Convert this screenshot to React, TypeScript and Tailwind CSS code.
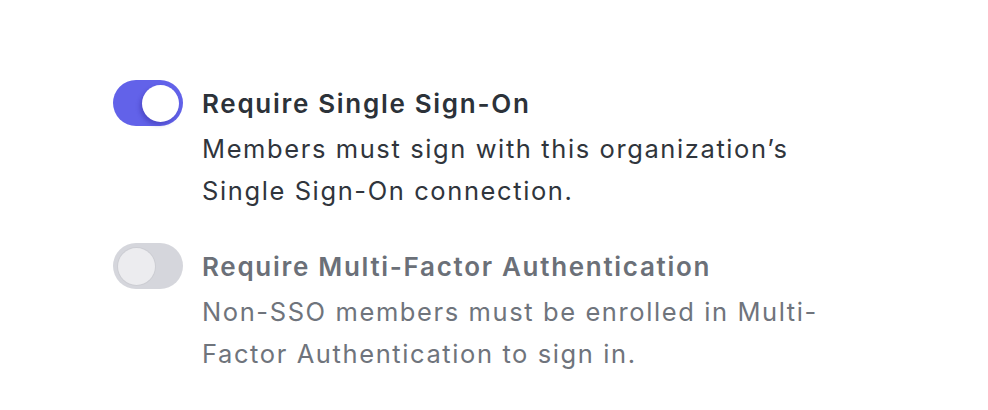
import React, { useState } from "react";

interface SettingProps {
  title: string;
  description: string;
  enabled: boolean;
  disabled?: boolean;
  onToggle: () => void;
}

function Setting({ title, description, enabled, disabled, onToggle }: SettingProps) {
  return (
    <div className="flex items-start gap-[19px]">
      {/* Switch */}
      <button
        type="button"
        role="switch"
        aria-checked={enabled}
        disabled={disabled}
        onClick={onToggle}
        className={`relative flex h-[46px] w-[70px] shrink-0 items-center rounded-full px-[4px] transition-colors ${
          enabled ? "bg-[#6262e9] justify-end" : "bg-[#d5d6dc] justify-start"
        }`}
      >
        <span
          className={`block h-[37px] w-[37px] rounded-full ${
            enabled
              ? "bg-white shadow-[-2px_3px_4px_rgba(40,30,140,0.35)]"
              : "bg-[#ececef] shadow-[0_0_0_1px_rgba(0,0,0,0.04)] ml-[1px]"
          }`}
        />
      </button>

      {/* Label */}
      <div className={`mt-[6px] w-[630px] ${disabled ? "text-[#6b7078]" : "text-[#2c3239]"}`}>
        <div className="text-[26px] font-semibold leading-[36px] tracking-[1.7px]">{title}</div>
        <p
          className={`mt-[6px] text-[25.5px] leading-[42px] tracking-[1.6px] ${
            disabled ? "text-[#6f747c]" : "text-[#30353c]"
          }`}
        >
          {description}
        </p>
      </div>
    </div>
  );
}

export default function App() {
  const [sso, setSso] = useState(true);
  const [mfa, setMfa] = useState(false);

  return (
    <div
      className="h-[410px] w-[988px] bg-white pl-[113px] pt-[80px]"
      style={{ fontFamily: "Inter, 'Noto Sans', sans-serif" }}
    >
      <div className="flex flex-col gap-[31px]">
        <Setting
          title="Require Single Sign-On"
          description="Members must sign with this organization’s Single Sign-On connection."
          enabled={sso}
          onToggle={() => setSso(!sso)}
        />
        <Setting
          title="Require Multi-Factor Authentication"
          description="Non-SSO members must be enrolled in Multi-Factor Authentication to sign in."
          enabled={mfa}
          disabled
          onToggle={() => setMfa(!mfa)}
        />
      </div>
    </div>
  );
}
